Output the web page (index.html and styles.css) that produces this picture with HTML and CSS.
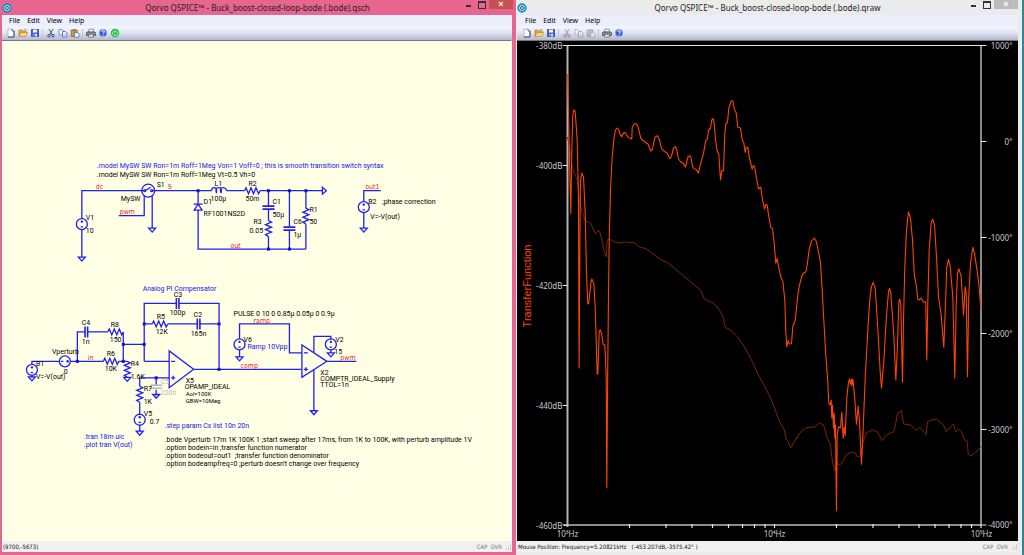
FILE: index.html
```html
<!DOCTYPE html>
<html lang="en">
<head>
<meta charset="utf-8">
<title>Qorvo QSPICE</title>
<link rel="stylesheet" href="styles.css">
</head>
<body>
<svg class="defs" width="0" height="0" aria-hidden="true">
  <defs>
    <symbol id="i-logo" viewBox="0 0 10 10"><circle cx="5" cy="5" r="3.7" fill="#fff" stroke="#0d93d0" stroke-width="2"/><circle cx="5" cy="5" r="1.5" fill="none" stroke="#123a58" stroke-width="1"/></symbol>
    <symbol id="i-new" viewBox="0 0 10 10"><path d="M2 1h4l2 2v6H2z" fill="#fff" stroke="#9aa5bd" stroke-width=".7"/><path d="M8 3v6H2" fill="none" stroke="#33466e"/><path d="M6 1v2h2" fill="none" stroke="#33466e" stroke-width=".7"/></symbol>
    <symbol id="i-open" viewBox="0 0 10 10"><path d="M1 8V2h3l1 1h3v2" fill="#e9a93c" stroke="#a9701d" stroke-width=".6"/><path d="M1 8.500 3 4.500h6.700L7.500 8.500z" fill="#ffd776" stroke="#b57a22" stroke-width=".6"/><path d="M6 1.500q2-1 3 1" fill="none" stroke="#668" stroke-width=".6"/></symbol>
    <symbol id="i-save" viewBox="0 0 10 10"><path d="M1.500 1.500h7v7h-7z" fill="#4b69cf" stroke="#28409a" stroke-width=".8"/><path d="M3 1.500h4v3H3z" fill="#eef3ff"/><path d="M3 6h4v2.500H3z" fill="#d6defa"/><path d="M3.500 6.400h1.300v2H3.500z" fill="#223a8d"/></symbol>
    <symbol id="i-cut" viewBox="0 0 10 10"><path d="M3 1l3 5.500M7 1L4 6.500" stroke="#4c5a78" stroke-width="1" fill="none"/><circle cx="3" cy="7.700" r="1.300" fill="none" stroke="#2c4aa5"/><circle cx="7" cy="7.700" r="1.300" fill="none" stroke="#2c4aa5"/></symbol>
    <symbol id="i-copy" viewBox="0 0 10 10"><path d="M1 1.500h3l1.500 1.500v4H1z" fill="#eef4ff" stroke="#5f80c5" stroke-width=".8"/><path d="M4.500 3.500h3L9 5v4H4.500z" fill="#eef4ff" stroke="#3f65b9" stroke-width=".8"/><path d="M5.500 6h2.500M5.500 7.500h2.500" stroke="#7897d5" stroke-width=".5"/></symbol>
    <symbol id="i-paste" viewBox="0 0 10 10"><path d="M1.200 2h6v6.500h-6z" fill="#d29542" stroke="#81531c" stroke-width=".7"/><path d="M3 1h2.500v1.700H3z" fill="#79808f"/><path d="M4.500 4.500h3L9 6v3.200H4.500z" fill="#edf2ff" stroke="#4b69ac" stroke-width=".7"/></symbol>
    <symbol id="i-print" viewBox="0 0 10 10"><path d="M3 1.200h4.500L7 4H2.500z" fill="#fff" stroke="#555" stroke-width=".6"/><path d="M1 4h8l.5 1v2.500h-9V5z" fill="#8b8f96" stroke="#3c4046" stroke-width=".7"/><path d="M2.500 6.500h5V9h-5z" fill="#eee" stroke="#444" stroke-width=".6"/><circle cx="8" cy="5.400" r=".5" fill="#f3c545"/></symbol>
    <symbol id="i-help" viewBox="0 0 10 10"><circle cx="5" cy="5" r="3.800" fill="#2b5ce4" stroke="#a9b5dd" stroke-width=".8"/><path d="M3.700 3.900q.2-1.400 1.500-1.300 1.500.2 1.200 1.500Q6.200 4.900 5.100 5.300V6.100M5.100 6.900v.9" fill="none" stroke="#fff"/></symbol>
    <symbol id="i-run" viewBox="0 0 10 10"><circle cx="5" cy="5" r="4.200" fill="#1fbf4f"/><path d="M3.500 3.200a2.400 2.400 0 1 0 3 0M5 2v3" fill="none" stroke="#d9ffe2" stroke-width=".8"/></symbol>
    <symbol id="i-grip" viewBox="0 0 6 6"><path d="M5 1h1M3 3h1M5 3h1M1 5h1M3 5h1M5 5h1" stroke="#aaa"/></symbol>

    <g id="gnd"><path d="M-3.500 0h7L0 4z"/></g>
    <g id="src"><circle r="5.500"/><path d="M-1.200-2.500h2.400M0-3.700v2.400M-1.200 2.700h2.400"/></g>
    <path id="res-h" d="M0 0l1.500-3 2.500 6 2.500-6 2.500 6 2.500-6 2.500 6L15.500 0"/>
    <path id="res-v" d="M0 0l3 1.500-6 2.500 6 2.500-6 2.500 6 2.500-6 2.500L0 16"/>
    <path id="cap-v" class="plate" d="M-6-1.500H6M-6 1.500H6"/>
    <path id="cap-h" class="plate" d="M-1.300-5.500v11M1.300-5.500v11"/>
    <rect id="dot" class="dot" x="-1.500" y="-1.500" width="3" height="3"/>
  </defs>
</svg>

<main class="desktop">
  <section class="window schematic">
    <header class="titlebar">
      <svg class="logo"><use href="#i-logo"/></svg>
      <h1>Qorvo QSPICE™ - Buck_boost-closed-loop-bode (.bode).qsch</h1>
      <div class="controls">
        <button class="min" aria-label="Minimize"></button><button class="max" aria-label="Maximize"></button><button class="close" aria-label="Close">×</button>
      </div>
    </header>
    <div class="client">
      <nav class="menu"><button>File</button><button>Edit</button><button>View</button><button>Help</button></nav>
      <div class="toolbar">
        <button aria-label="New"><svg><use href="#i-new"/></svg></button><button aria-label="Open"><svg><use href="#i-open"/></svg></button><button aria-label="Save"><svg><use href="#i-save"/></svg></button>
        <span class="sep"></span>
        <button aria-label="Cut"><svg><use href="#i-cut"/></svg></button><button aria-label="Copy"><svg><use href="#i-copy"/></svg></button><button aria-label="Paste"><svg><use href="#i-paste"/></svg></button>
        <span class="sep"></span>
        <button aria-label="Print"><svg><use href="#i-print"/></svg></button><button aria-label="Help"><svg><use href="#i-help"/></svg></button><button aria-label="Run"><svg><use href="#i-run"/></svg></button>
      </div>
      <div class="canvas">
        <svg viewBox="2 41 510 500" role="img" aria-label="Buck boost closed loop schematic">
          <g class="wire">
            <path d="M82 218.500V190.500H142M155 190.500H212M227 190.500H245M260.500 190.500H323M82 229.500V257"/>
            <circle cx="148.500" cy="190.500" r="6.500"/>
            <path d="M142 190.500h2M153 190.500h2M145.500 190.500l5.500-3.500"/><circle cx="145" cy="190.500" r="1"/><circle cx="152" cy="190.500" r="1"/>
            <path d="M119 215.500H144.500V196M152.500 196V228"/>
            <path d="M212 190.500q0-3 2.500-3t2.500 3v2.500M217 193q-2-5.500 2-5.500t2.500 5.500M221.500 193q-2-5.500 1.500-5.500t4 3"/>
            <path d="M198.500 190.500V204M198.500 210V249H306.500M194.500 210h8l-4-6zM194 204h9"/>
            <path d="M323 187l4 3.500-4 3.500z"/>
            <path d="M269 190.500V206M269 209V220.500M269 236.500V249M290 190.500V227M290 230V249M306.500 190.500V208M306.500 224V249"/>
            <path d="M381.500 190.500H364.500V201.500M364.500 212.500V228"/>
            <use href="#gnd" x="82" y="257"/><use href="#gnd" x="152.500" y="228"/><use href="#gnd" x="364.500" y="228"/>
            <use href="#src" x="82" y="224"/><use href="#src" x="364.500" y="207"/>
            <use href="#res-h" x="245" y="190.500"/><use href="#res-v" x="269" y="220.500"/><use href="#res-v" x="306.500" y="208"/>
            <use href="#cap-v" x="269" y="207.500"/><use href="#cap-v" x="290" y="228.500"/>
            <use href="#dot" x="198.500" y="190.500"/><use href="#dot" x="269" y="190.500"/><use href="#dot" x="290" y="190.500"/><use href="#dot" x="306.500" y="190.500"/><use href="#dot" x="269" y="249"/><use href="#dot" x="290" y="249"/>

            <path d="M144.500 361.500V303.500H176.500M179 303.500H219.500V369.500M144.500 324H152.500M168 324H197.500M200 324H219.500"/>
            <path d="M32 364.500V361.500H59.500M70.500 361.500H103.500M119 361.500H127.500M77.500 361.500V332H85M88 332H108M123.500 332V361.500M123.500 344.500H144.500M144.500 361.500H169.500"/>
            <path d="M61 361.500h2.500M66.500 361.500h2.500M67.700 360.200v2.600"/>
            <circle cx="65" cy="361.500" r="5.500"/>
            <path d="M169.500 351V388L194 369.500zM171.500 361.500h4M171.500 378h4M173.500 376v4"/>
            <path d="M169.500 378H140V386.500M140 402.500V414.500M140 425.500V432M156.500 378V385M156.500 390V396"/>
            <path d="M194 369.500H302.500M240 339V324H290V353H302.500M240 350V357M302.500 345V377.500L327.500 361.500zM304.500 353h4M304.500 369.500h4M306.500 367.500v4"/>
            <path d="M314.500 352.500V336.500H331.500V339.500M327.500 361.500H357M314.500 370V411M32 375.500V378M331.500 350V353"/>
            <use href="#gnd" x="32" y="377"/><use href="#gnd" x="127.500" y="377.500"/><use href="#gnd" x="140" y="431.500"/><use href="#gnd" x="156.500" y="394.500"/><use href="#gnd" x="240" y="357"/><use href="#gnd" x="331.500" y="353"/><use href="#gnd" x="314.500" y="411"/>
            <use href="#src" x="32" y="370"/><use href="#src" x="140" y="420"/><use href="#src" x="240" y="344.500"/><use href="#src" x="331.500" y="344.500"/>
            <use href="#res-h" x="152.500" y="324"/><use href="#res-h" x="108" y="332"/><use href="#res-h" x="103.500" y="361.500"/><use href="#res-v" x="127.500" y="361.500"/><use href="#res-v" x="140" y="386.500"/>
            <use href="#cap-h" x="178" y="303.500"/><use href="#cap-h" x="199" y="324"/><use href="#cap-h" x="86.500" y="332"/>
            <use href="#dot" x="144.500" y="324"/><use href="#dot" x="144.500" y="344.500"/><use href="#dot" x="123.500" y="344.500"/><use href="#dot" x="123.500" y="361.500"/><use href="#dot" x="77.500" y="361.500"/><use href="#dot" x="156.500" y="378"/><use href="#dot" x="219.500" y="324"/><use href="#dot" x="219.500" y="369.500"/>
          </g>
          <g class="wire off"><use href="#cap-v" x="156.500" y="387"/></g>
          <g class="label directive">
            <text x="97" y="168">.model MySW SW Ron=1m Roff=1Meg Von=1 Voff=0 ; this is smooth transition switch syntax</text>
            <text x="143" y="291">Analog PI Compensator</text><text x="248" y="349">Ramp 10Vpp</text>
            <text x="165" y="428">.step param Cx list 10n 20n</text><text x="84" y="439">.tran 18m uic</text><text x="84" y="447">.plot tran V(out)</text>
          </g>
          <g class="label net">
            <text x="96" y="189">dc</text><text x="168" y="189">S</text><text x="120" y="214">pwm</text><text x="231" y="248">out</text><text x="366" y="189">out1</text>
            <text x="88" y="360">in</text><text x="254" y="323">ramp</text><text x="241" y="368">comp</text><text x="341" y="360">pwm</text>
          </g>
          <g class="label off-text"><text x="161" y="384">C5</text><text x="161" y="395">220n</text></g>
          <g class="label">
            <text x="97" y="177">.model MySW SW Ron=1m Roff=1Meg Vt=0.5 Vh=0</text>
            <text x="86" y="220">V1</text><text x="86" y="233">10</text><text x="121" y="201">MySW</text><text x="157" y="187">S1</text>
            <text x="204" y="204">D1</text><text x="204" y="216">RF1001NS2D</text><text x="215" y="186">L1</text><text x="211" y="201">100µ</text>
            <text x="249" y="186">R2</text><text x="246" y="201">50m</text><text x="273" y="204">C1</text><text x="273" y="217">50µ</text>
            <text x="254" y="224">R3</text><text x="250" y="233">0.05</text><text x="294" y="224">C6</text><text x="294" y="237">1µ</text>
            <text x="310" y="212">R1</text><text x="310" y="224">50</text><text x="369" y="204">B2</text><text x="383" y="204">;phase correction</text><text x="371" y="219">V=-V(out)</text>
            <text x="174" y="297">C3</text><text x="170" y="315">100p</text><text x="157" y="319">R5</text><text x="156" y="334">12K</text><text x="194" y="317">C2</text><text x="191" y="336">165n</text>
            <text x="82" y="325">C4</text><text x="82" y="344">1n</text><text x="111" y="327">R8</text><text x="110" y="342">150</text><text x="107" y="356">R6</text><text x="105" y="371">10K</text>
            <text x="131" y="366">R4</text><text x="131" y="379">1.6K</text><text x="52" y="354">Vperturb</text><text x="64" y="374">0</text><text x="36" y="366">B1</text><text x="36" y="379">V=-V(out)</text>
            <text x="144" y="391">R7</text><text x="144" y="404">1K</text><text x="144" y="416">V5</text><text x="150" y="424">0.7</text>
            <text x="186" y="383">X5</text><text x="185" y="389">OPAMP_IDEAL</text><text class="small" x="186" y="396">Aol=100K</text><text class="small" x="186" y="403">GBW=10Meg</text>
            <text x="234" y="316">PULSE 0 10 0 0.85µ 0.05µ 0 0.9µ</text><text x="244" y="342">V6</text><text x="336" y="342">V2</text><text x="335" y="354">15</text>
            <text x="321" y="375">X2</text><text x="321" y="381">COMPTR_IDEAL_Supply</text><text x="321" y="387">TTOL=1n</text>
            <text x="165" y="442">.bode Vperturb 17m 1K 100K 1 ;start sweep after 17ms, from 1K to 100K, with perturb amplitude 1V</text>
            <text x="165" y="450">.option bodein=in ;transfer function numerator</text>
            <text x="165" y="458">.option bodeout=out1&#160; ;transfer function denominator</text>
            <text x="165" y="466">.option bodeampfreq=0 ;perturb doesn't change over frequency</text>
          </g>
        </svg>
      </div>
      <footer class="status"><span>(9700,-5673)</span><span class="keys"><span>CAP</span><span>OVR</span><svg><use href="#i-grip"/></svg></span></footer>
    </div>
  </section>

  <section class="window plot">
    <header class="titlebar">
      <svg class="logo"><use href="#i-logo"/></svg>
      <h1>Qorvo QSPICE™ - Buck_boost-closed-loop-bode (.bode).qraw</h1>
      <div class="controls">
        <button class="min" aria-label="Minimize"></button><button class="max" aria-label="Maximize"></button><button class="close" aria-label="Close">×</button>
      </div>
    </header>
    <div class="client">
      <nav class="menu"><button>File</button><button>Edit</button><button>View</button><button>Help</button></nav>
      <div class="toolbar">
        <button aria-label="New"><svg><use href="#i-new"/></svg></button><button aria-label="Open"><svg><use href="#i-open"/></svg></button><button aria-label="Save"><svg><use href="#i-save"/></svg></button>
        <span class="sep"></span>
        <button disabled aria-label="Cut"><svg><use href="#i-cut"/></svg></button><button disabled aria-label="Copy"><svg><use href="#i-copy"/></svg></button><button disabled aria-label="Paste"><svg><use href="#i-paste"/></svg></button>
        <span class="sep"></span>
        <button aria-label="Print"><svg><use href="#i-print"/></svg></button><button aria-label="Help"><svg><use href="#i-help"/></svg></button>
      </div>
      <div class="canvas">
        <svg viewBox="517 41 500 500" role="img" aria-label="TransferFunction bode plot">
          <path class="axis-bottom" d="M563 525H981"/>
          <path class="axis-left" d="M567 45V527"/>
          <path class="axis" d="M562 45.500H986M980.500 45V528M562 165.500h5M562 285.500h5M562 405.500h5M562 525h5M981 141.500h5M981 237.500h5M981 333.500h5M981 429.500h5M981 525h5"/>
          <path class="axis" d="M629 524v4M665.500 524v4M691.500 524v4M712 524v4M728 524v4M742 524v4M754 524v4M764.500 524v4M774 524v4M836 524v4M872.500 524v4M898.500 524v4M918.500 524v4M934.500 524v4M948.500 524v4M960.500 524v4M971 524v4"/>
          <polyline class="phase" points="567,137 569.700,150 571.300,165 573.700,173 577,180 579,203 582,213 585,221 590,223 595,234 598,230 600,234 603.700,251.700 605.700,257 606.700,240 609,239 613.700,241.700 618.700,243 624,242 634,242.700 638.700,246.700 646,249 654,255 661,260 667,262.700 674,268 682,275 690,281.700 700,290 704,299 707,300.700 713,303 719,310 723,318 724.300,327 730,330 736,335.700 744,347 752,362 758,375 764,386 770,398 774,408 779,421.700 784,430 785.700,439 788,442 790,448 796,438 801,431 805.700,427.700 814,427 819,423 823,425 826.700,438 830,445 832,462 834.700,470.700 836,462 838,464.500 840.700,464 845.700,455 850.700,452 854.700,453 857,457 859.700,455.700 862.700,441.700 865.700,433 872,430 877,432 881.700,440.700 886,435 893,431.700 895,425 897,413 901,410.700 903,424 910.700,425 915.700,430.700 919,427 925.700,434.700 927,421.700 930.700,420 935.700,419 943,425 945.700,431.700 953,424 955,432 958,429 961,431.700 964,440 966.700,441 967.700,454 970.700,456 974.700,453 980.500,446.700"/>
          <polyline class="gain" points="567,74 570.300,213.500 571.300,150 572.300,115 573.300,110 574.700,111.500 576.700,140 578,200 578.600,368 579.500,227 580,180 581.300,173 583,177 584.700,213 586,273 587.300,304 588.300,303 589.300,293 590.500,281.500 591.300,279 593.300,283.300 594.700,307 596.700,374.300 597.300,374 598.700,331.700 599.700,329.700 601,333 602.700,344.300 604.300,345 605.700,375 606.300,487.700 607.300,361.700 608,295 608.700,240 610,190 611.700,156.700 613.700,136.700 615,130 616.700,128 618.300,130 619.700,134.700 621.300,136.700 623,133 624.300,132.300 626.300,135 627.700,137.300 631.300,139 631.700,127.300 633.700,124 636,123.700 637.700,127.300 640.300,138.300 642,140.300 644.300,141.700 647.700,144.300 650.300,151 652,149.300 654.300,137.300 657,135.700 658.700,139 661,148.300 663.300,151 666.700,153.300 669.300,158.700 671,156 673,148 675,146.700 676.300,150 678,159 680.300,162 683.300,163.700 685,167 687.300,157.300 689.300,155.700 690.500,157.500 692,166.700 693.700,168.700 696.300,170 698,173.300 699.700,165 703,153.300 705.300,140.700 707,139 708,130 710,128 711.300,120 712.700,118.700 713.700,123.300 715,140 716.700,151 718.300,154 720,180 721.300,170.700 723,170.700 724.300,133.300 725.300,124 727,122.300 728.300,108.300 730.700,100.700 732.300,101 734,110 735.700,112.700 737.300,127.300 740,128 741.700,140 743.300,142.700 744.700,152.300 745.700,147.700 747.300,147.300 749,158.300 751.700,169 752.700,165.700 754,166 756,178.300 758,189 760.300,187.300 762,200 764,209 765.300,204.300 766.700,205 768.300,216.700 770.300,227.700 772,228.300 773.700,243.300 775.300,263.300 776.700,258.300 778,266.700 780.700,278.300 782.300,281 784.300,300 785.300,331.700 786.300,346.700 787.700,340.700 788.700,344 791,343.700 792.300,326.700 794.700,320 796,308 797.300,295 798.700,286.700 801.300,276 803.300,272.700 805.300,272 806.700,265 808.700,249.300 811,241 813.700,238 815.700,241 818.300,253.300 820,262.700 821.700,290 823,315 825.300,355 827.300,381.700 828.300,403.300 829.500,405 830.700,400 831.300,418 832,405 833,428 833.700,413 834.300,438 835,425 836,510.700 836.700,435 838,426.700 840,428 841.300,412.300 842.700,438.300 843.700,426.700 844.700,435.700 846.300,398.300 848,382.300 849,379 850,384.300 851,379 851.500,386 852.300,379 854,395 856,424.300 857.700,406 859,421.700 861,464.300 862.700,428 864.700,378 868,318 869.700,295 871,286.700 872.700,282.300 874.700,288.300 877.300,328 879.700,371.700 881,388.300 883.300,361.700 886,315 888,291.700 889,288.300 890.300,293 893.300,335 895.300,380 897,345 898.300,301.700 899.300,299 900.300,305 902,382.300 903,321 904.300,266.700 906,230 908,211.700 910,218.300 912,240 913.700,273.300 916,287.300 917.300,299 919,300 920.700,298 923,302.300 925.300,301.700 926.300,360 927.300,301.700 928.700,250 930.700,222.700 932.300,219.300 934,225 936,256.700 938,296.700 940.700,315 943.300,347.300 944.700,311.700 946.300,266.700 948,259.300 949.700,266.700 952.300,296.700 954.300,378.300 955.700,305 957,273.300 958.300,268.700 960.700,276.700 963,315 964.700,286.700 965.700,293 967,376.700 968.300,295 970,263.300 972.300,247.300 974,253.300 976,266.700 978.300,283.300 980.500,310"/>
          <g class="tick left"><text x="562" y="49">-380dB</text><text x="562" y="169">-400dB</text><text x="562" y="289">-420dB</text><text x="562" y="409">-440dB</text><text x="562" y="529">-460dB</text></g>
          <g class="tick left"><text x="1012" y="49">1000°</text><text x="1012" y="145">0°</text><text x="1012" y="241">-1000°</text><text x="1012" y="337">-2000°</text><text x="1012" y="433">-3000°</text><text x="1012" y="528">-4000°</text></g>
          <g class="tick mid"><text x="567" y="537">10³Hz</text><text x="774" y="537">10⁴Hz</text><text x="981" y="537">10⁵Hz</text></g>
          <text class="trace-name" transform="translate(530 286) rotate(-90)">TransferFunction</text>
        </svg>
      </div>
      <footer class="status"><span>Mouse Position: Frequency=5.20821kHz &#160; (-453.207dB,-3575.42° )</span><span class="keys"><span>CAP</span><span>OVR</span><svg><use href="#i-grip"/></svg></span></footer>
    </div>
  </section>
</main>
</body>
</html>
```

FILE: styles.css
```css
* { box-sizing: border-box; }
body { margin: 0; font-family: "Noto Sans", sans-serif; }
.defs { position: absolute; }
.desktop { display: grid; grid-template-columns: 516fr 506fr 2px; height: 100vh; background: #2f8793; }
.window { display: flex; flex-direction: column; min-width: 0; min-height: 0; }
.schematic { background: #e86590; padding: 0 3px 3px 2px; }
.plot { background: #ebebeb; padding: 0 4px 3px 1px; }

.titlebar { flex: 0 0 15px; display: grid; grid-template-columns: 60px 1fr 60px; align-items: center; }
.logo { width: 10px; height: 10px; }
.titlebar h1 { margin: 0; font-size: 8px; line-height: 14px; font-weight: 400; text-align: center; color: #222; white-space: nowrap; }
.controls { display: flex; justify-content: flex-end; align-items: flex-start; height: 15px; }
.controls button { border: 0; padding: 0; background: none; height: 9px; width: 14px; display: flex; align-items: center; justify-content: center; }
.controls .min::before { content: ""; width: 5px; height: 2px; background: #333; margin-top: 3px; }
.controls .max::before { content: ""; width: 6px; height: 5px; border: 1px solid #333; border-top-width: 2px; }
.controls .close { width: 24px; color: #fff; font: bold 9px/9px "Liberation Sans", sans-serif; background: #c8504f; }
.plot .close { background: #bcbcbc; }

.client { flex: 1; min-height: 0; display: flex; flex-direction: column; }
.schematic .client { margin-right: 1px; }
.menu { flex: 0 0 11px; display: flex; gap: 7px; padding-left: 7px; background: #ebeefc; }
.menu button { border: 0; padding: 0; background: none; font: 7px/11px "Noto Sans", sans-serif; color: #000; }
.toolbar { flex: 0 0 14px; display: flex; align-items: center; gap: 2px; padding-left: 4px; background: linear-gradient(#f4f8fd, #e3e7f2 45%, #b5b8d0); }
.plot .menu { padding-left: 8px; }
.plot .toolbar { padding-left: 5px; }
.toolbar button { border: 0; padding: 0; background: none; width: 10px; height: 10px; }
.toolbar button svg { display: block; width: 10px; height: 10px; }
.toolbar button:disabled { filter: grayscale(1); opacity: .5; }
.sep { width: 1px; height: 8px; background: #c3c7d6; margin-right: 1px; }
.canvas { flex: 1; min-height: 0; border-top: 1px solid #777; overflow: hidden; }
.canvas svg { display: block; width: 100%; height: 100%; }
.schematic .canvas { background: #ffffe6; border-right: 1px solid #fff; }
.plot .canvas { background: #000; }
.status { flex: 0 0 11px; display: flex; justify-content: space-between; background: #f0f0f0; padding: 0 1px; font: 6px/11px "DejaVu Sans Condensed", "DejaVu Sans", sans-serif; color: #111; white-space: nowrap; }
.keys { display: flex; align-items: center; gap: 3px; color: #777; }
.keys svg { width: 6px; height: 6px; }

.wire { fill: none; stroke: #2020f4; stroke-width: 1.3; }
.wire .plate, .plate { stroke-width: 1.6; }
.dot { fill: #1010d8; stroke: none; }
.off { stroke: #b8b8b0; }
.label { font: 7px Roboto, sans-serif; fill: #000; }
.label .small { font-size: 6px; }
.directive { fill: #1414f0; }
.net { fill: #f01c1c; font: 7px "DejaVu Sans Condensed", "DejaVu Sans", sans-serif; }
.off-text { fill: #b8b8b0; }

.axis { fill: none; stroke: #e4e4e4; stroke-width: 1.2; }
.axis-left { stroke: #b4b4b8; stroke-width: 2; }
.axis-bottom { stroke: #8c8c8c; stroke-width: 2; }
.gain { fill: none; stroke: #ff4400; stroke-width: 1.1; stroke-linejoin: round; }
.phase { fill: none; stroke: #7c2404; stroke-width: 1; }
.tick { font: 8px "Noto Sans", sans-serif; fill: #c8c8cc; }
.left { text-anchor: end; }
.mid { text-anchor: middle; }
.trace-name { font: 11px "Liberation Sans", sans-serif; fill: #ff4400; text-anchor: middle; }
```
